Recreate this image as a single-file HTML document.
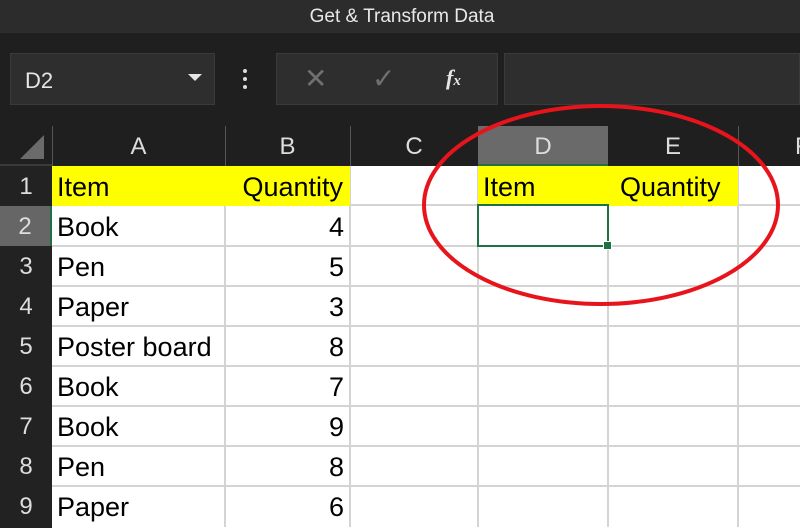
<!DOCTYPE html>
<html><head><style>
*{margin:0;padding:0;box-sizing:border-box}
body{width:800px;height:527px;overflow:hidden;background:#fff;font-family:"Liberation Sans",sans-serif;position:relative}
.a{position:absolute}
.cell{position:absolute;font-size:27px;color:#000;line-height:42px;white-space:nowrap}
.rh{position:absolute;left:0;width:52px;text-align:center;color:#ddd;font-size:24px;line-height:42px;background:#222}
.ch{position:absolute;top:126px;height:40px;color:#ddd;font-size:24px;line-height:42px;text-align:center}
.vl{position:absolute;top:166px;width:2px;height:361px;background:#d4d4d4}
.hl{position:absolute;left:52px;width:748px;height:2px;background:#d4d4d4}
</style></head><body>
<div class="a" style="left:0;top:0;width:800px;height:33px;background:#2c2c2c;color:#e8e8e8;font-size:19px;line-height:33px;text-align:center;padding-left:4px">Get &amp; Transform Data</div>
<div class="a" style="left:0;top:33px;width:800px;height:133px;background:#1f1f1f"></div>
<div class="a" style="left:10px;top:53px;width:205px;height:52px;background:#2e2e2e;border:1px solid #3a3a3a"></div>
<div class="a" style="left:25px;top:55px;color:#e6e6e6;font-size:22px;line-height:52px">D2</div>
<div class="a" style="left:188px;top:74px;width:0;height:0;border-left:7px solid transparent;border-right:7px solid transparent;border-top:7px solid #e6e6e6"></div>
<div class="a" style="left:243px;top:69px;width:4px;height:4px;background:#ddd;border-radius:2px;box-shadow:0 8px 0 #ddd,0 16px 0 #ddd"></div>
<div class="a" style="left:276px;top:53px;width:222px;height:52px;background:#2e2e2e;border:1px solid #3a3a3a"></div>
<div class="a" style="left:304px;top:57px;color:#707070;font-size:28px;line-height:44px">✕</div>
<div class="a" style="left:372px;top:57px;color:#707070;font-size:28px;line-height:44px">✓</div>
<div class="a" style="left:446px;top:56px;color:#e6e6e6;font-size:22px;line-height:44px;font-family:'Liberation Serif',serif;font-style:italic;font-weight:bold">f<span style="font-size:15px">x</span></div>
<div class="a" style="left:504px;top:53px;width:296px;height:52px;background:#2e2e2e;border:1px solid #3a3a3a"></div>
<div class="a" style="left:20px;top:135px;width:0;height:0;border-left:24px solid transparent;border-bottom:24px solid #6b6b6b"></div>
<div class="a" style="left:0;top:164px;width:52px;height:2px;background:#3a3a3a"></div>
<div class="a" style="left:52px;top:126px;width:1px;height:40px;background:#555"></div>
<div class="a" style="left:225px;top:126px;width:1px;height:40px;background:#555"></div>
<div class="a" style="left:350px;top:126px;width:1px;height:40px;background:#555"></div>
<div class="a" style="left:738px;top:126px;width:1px;height:40px;background:#555"></div>
<div class="ch" style="left:52px;width:173px">A</div>
<div class="ch" style="left:225px;width:125px">B</div>
<div class="ch" style="left:350px;width:128px">C</div>
<div class="ch" style="left:478px;width:130px;background:#6a6a6a;border-bottom:2px solid #1e7145">D</div>
<div class="ch" style="left:608px;width:130px">E</div>
<div class="ch" style="left:738px;width:130px;text-align:left;padding-left:57px">F</div>
<div class="a" style="left:0;top:166px;width:52px;height:361px;background:#222"></div>
<div class="rh" style="top:166px">1</div>
<div class="rh" style="top:206px;height:40px;background:#666;border-right:2px solid #1e7145">2</div>
<div class="rh" style="top:246px">3</div>
<div class="rh" style="top:286px">4</div>
<div class="rh" style="top:326px">5</div>
<div class="rh" style="top:366px">6</div>
<div class="rh" style="top:406px">7</div>
<div class="rh" style="top:446px">8</div>
<div class="rh" style="top:486px">9</div>
<div class="vl" style="left:224px"></div>
<div class="vl" style="left:349px"></div>
<div class="vl" style="left:477px"></div>
<div class="vl" style="left:607px"></div>
<div class="vl" style="left:737px"></div>
<div class="hl" style="top:245px"></div>
<div class="hl" style="top:285px"></div>
<div class="hl" style="top:325px"></div>
<div class="hl" style="top:365px"></div>
<div class="hl" style="top:405px"></div>
<div class="hl" style="top:445px"></div>
<div class="hl" style="top:485px"></div>
<div class="hl" style="top:204px"></div>
<div class="a" style="left:52px;top:166px;width:298px;height:40px;background:#ffff00"></div>
<div class="a" style="left:478px;top:166px;width:260px;height:40px;background:#ffff00"></div>
<div class="cell" style="left:57px;top:166px">Item</div>
<div class="cell" style="left:225px;width:118px;text-align:right;top:166px;direction:rtl">Quantity</div>
<div class="cell" style="left:483px;top:166px">Item</div>
<div class="cell" style="left:620px;top:166px">Quantity</div>
<div class="cell" style="left:57px;top:206px">Book</div>
<div class="cell" style="left:57px;top:246px">Pen</div>
<div class="cell" style="left:57px;top:286px">Paper</div>
<div class="cell" style="left:57px;top:326px">Poster board</div>
<div class="cell" style="left:57px;top:366px">Book</div>
<div class="cell" style="left:57px;top:406px">Book</div>
<div class="cell" style="left:57px;top:446px">Pen</div>
<div class="cell" style="left:57px;top:486px">Paper</div>
<div class="cell" style="left:225px;width:119px;text-align:right;top:206px">4</div>
<div class="cell" style="left:225px;width:119px;text-align:right;top:246px">5</div>
<div class="cell" style="left:225px;width:119px;text-align:right;top:286px">3</div>
<div class="cell" style="left:225px;width:119px;text-align:right;top:326px">8</div>
<div class="cell" style="left:225px;width:119px;text-align:right;top:366px">7</div>
<div class="cell" style="left:225px;width:119px;text-align:right;top:406px">9</div>
<div class="cell" style="left:225px;width:119px;text-align:right;top:446px">8</div>
<div class="cell" style="left:225px;width:119px;text-align:right;top:486px">6</div>
<div class="a" style="left:477px;top:204px;width:132px;height:43px;border:2px solid #1e7145"></div>
<div class="a" style="left:603px;top:241px;width:9px;height:9px;background:#1e7145;border:1px solid #fff"></div>
<svg class="a" style="left:0;top:0" width="800" height="527"><ellipse cx="601" cy="205" rx="177" ry="99" fill="none" stroke="#e8141c" stroke-width="4"/></svg>
</body></html>
